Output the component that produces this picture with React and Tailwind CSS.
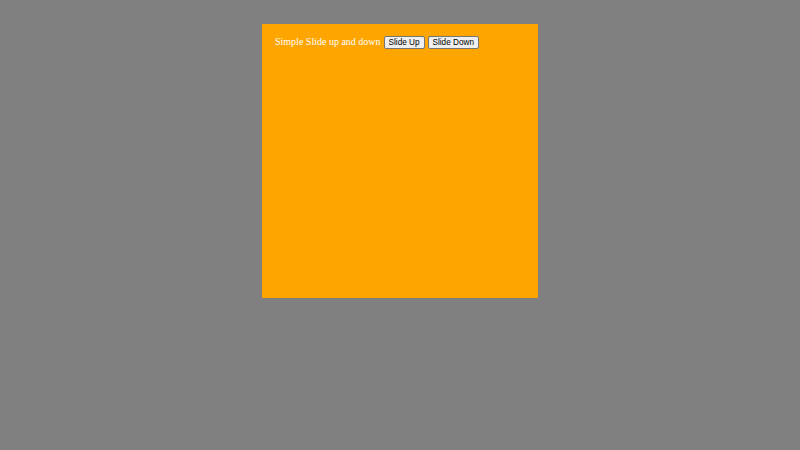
export default function App() {
  return (
    <div className="w-full h-[450px] bg-[#808080] pt-6">
      <div className="mx-auto w-[276px] h-[274px] bg-[#ffa500] pl-[13px] pt-[11px]">
        <div className="flex items-center h-[14px]">
          <span className="text-white text-[10px] leading-[14px] font-['Liberation_Serif',serif]">Simple Slide up and down</span>
          <button className="ml-[3px] h-[13px] px-[4px] bg-[#efefef] border border-[#767676] rounded-[2px] text-black text-[8.2px] leading-[11px] font-['Liberation_Sans',Arial,sans-serif]">Slide Up</button>
          <button className="ml-[3px] h-[13px] px-[4px] bg-[#efefef] border border-[#767676] rounded-[2px] text-black text-[8.2px] leading-[11px] font-['Liberation_Sans',Arial,sans-serif]">Slide Down</button>
        </div>
      </div>
    </div>
  );
}
